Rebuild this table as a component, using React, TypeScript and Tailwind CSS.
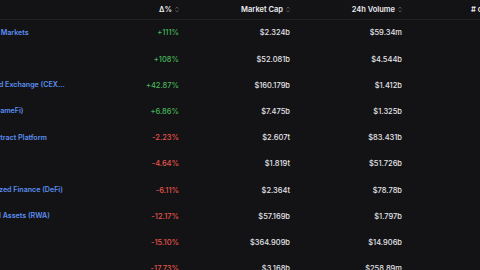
import React from 'react';

type Row = {
  name: string;
  change: string;
  up: boolean;
  cap: string;
  volume: string;
};

const rows: Row[] = [
  { name: 'Prediction Markets', change: '+111%', up: true, cap: '$2.324b', volume: '$59.34m' },
  { name: 'Meme', change: '+108%', up: true, cap: '$52.081b', volume: '$4.544b' },
  { name: 'Centralized Exchange (CEX) Token', change: '+42.87%', up: true, cap: '$160.179b', volume: '$1.412b' },
  { name: 'Gaming (GameFi)', change: '+6.86%', up: true, cap: '$7.475b', volume: '$1.325b' },
  { name: 'Smart Contract Platform', change: '-2.23%', up: false, cap: '$2.607t', volume: '$83.431b' },
  { name: 'Layer 1', change: '-4.64%', up: false, cap: '$1.819t', volume: '$51.726b' },
  { name: 'Decentralized Finance (DeFi)', change: '-6.11%', up: false, cap: '$2.364t', volume: '$78.78b' },
  { name: 'Real World Assets (RWA)', change: '-12.17%', up: false, cap: '$57.169b', volume: '$1.797b' },
  { name: 'AI', change: '-15.10%', up: false, cap: '$364.909b', volume: '$14.906b' },
  { name: 'NFT', change: '-17.73%', up: false, cap: '$3.168b', volume: '$258.89m' },
];

function SortIcon() {
  return (
    <svg width="4" height="7" viewBox="0 0 4 7" className="ml-[3px] inline-block">
      <path d="M0.6 2.6 L2 1.1 L3.4 2.6" stroke="#6b6f78" strokeWidth="0.8" fill="none" />
      <path d="M0.6 4.4 L2 5.9 L3.4 4.4" stroke="#6b6f78" strokeWidth="0.8" fill="none" />
    </svg>
  );
}

export default function App() {
  return (
    <div
      className="w-[480px] h-[270px] overflow-hidden bg-[#131316] text-[7.5px] text-[#e4e4e7]"
      style={{ fontFamily: 'Inter, "Noto Sans", sans-serif' }}
    >
      <div className="ml-[-36px] w-[600px]">
        {/* header */}
        <div className="flex h-[20px] items-center border-b border-[#1f1f24] font-semibold text-[#ececef]">
          <div className="w-[104px]" />
          <div className="w-[111px] flex items-center justify-end">
            Δ%<SortIcon />
          </div>
          <div className="w-[111px] flex items-center justify-end">
            Market Cap<SortIcon />
          </div>
          <div className="w-[112px] flex items-center justify-end">
            24h Volume<SortIcon />
          </div>
          <div className="pl-[69px] whitespace-nowrap"># of Coins</div>
        </div>

        {rows.map(row => (
          <div key={row.name} className="flex h-[26.2px] items-center font-medium">
            <div className="w-[104px] truncate pr-[1px] text-[7.1px] font-semibold text-[#5b8ff0]">{row.name}</div>
            <div className={`w-[111px] text-right ${row.up ? 'text-[#44b657]' : 'text-[#e5534b]'}`}>
              {row.change}
            </div>
            <div className="w-[111px] text-right">{row.cap}</div>
            <div className="w-[112px] text-right">{row.volume}</div>
            <div className="pl-[69px]" />
          </div>
        ))}
      </div>
    </div>
  );
}
